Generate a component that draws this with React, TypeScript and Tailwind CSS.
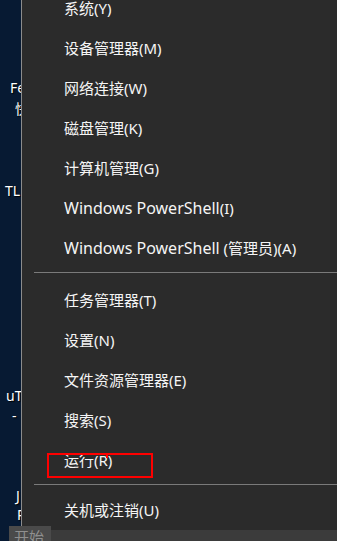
import React from 'react';

const groups: string[][] = [
  [
    '系统(Y)',
    '设备管理器(M)',
    '网络连接(W)',
    '磁盘管理(K)',
    '计算机管理(G)',
    'Windows PowerShell(I)',
    'Windows PowerShell (管理员)(A)',
  ],
  ['任务管理器(T)', '设置(N)', '文件资源管理器(E)', '搜索(S)', '运行(R)'],
  ['关机或注销(U)'],
];

const desktopLabels = [
  { text: 'Fe', top: 81, left: 10 },
  { text: '快', top: 102, left: 15 },
  { text: 'TL', top: 184, left: 5 },
  { text: 'uT', top: 389, left: 6 },
  { text: '-', top: 409, left: 12 },
  { text: 'J', top: 489, left: 16 },
  { text: 'P', top: 508, left: 17 },
];

function MenuItem({ label, marked }: { label: string; marked?: boolean }) {
  const ps = 'Windows PowerShell';
  return (
    <div className="relative h-[40px] flex items-center pl-[42px] text-[15px] text-[#f5f5f5] whitespace-nowrap">
      {label.startsWith(ps) ? (
        <span>
          <span className="text-[16px]">{ps}</span>
          {label.slice(ps.length)}
        </span>
      ) : (
        label
      )}
      {marked && (
        <>
          {/* annotation box drawn over the screenshot */}
          <div className="absolute left-[25px] top-[13px] w-[106px] h-[25px] border-2 border-[#ff0000]" />
          <div className="absolute left-[84px] top-[13px] w-[2px] h-[5px] bg-[#ff0000]" />
        </>
      )}
    </div>
  );
}

export default function App() {
  return (
    <div
      className="relative w-[337px] h-[541px] overflow-hidden bg-[#071a33] flex flex-col"
      style={{ fontFamily: '"Noto Sans", "Noto Sans CJK SC", sans-serif' }}
    >
      <div className="flex h-[530px]">
        {/* desktop behind the menu */}
        <div className="relative w-[21px] shrink-0 overflow-hidden bg-[#071a33]">
          {desktopLabels.map((l, i) => (
            <span
              key={i}
              className="absolute text-[14px] leading-none text-white [text-shadow:1px_1px_1px_#000]"
              style={{ top: l.top, left: l.left }}
            >
              {l.text}
            </span>
          ))}
        </div>

        {/* Win+X menu */}
        <div className="flex-1 border-l border-[#8c8c8c] bg-[#2b2b2b] overflow-hidden">
          <div className="-mt-[12px]">
            {groups.map((items, gi) => (
              <div key={gi}>
                {gi > 0 && (
                  <div className={gi === 1 ? 'pt-[4px] pb-[7px]' : 'pt-[4px] pb-[5px]'}>
                    <div className="ml-[12px] h-px bg-[#7a7a7a]" />
                  </div>
                )}
                {items.map((label) => (
                  <MenuItem key={label} label={label} marked={label === '运行(R)'} />
                ))}
              </div>
            ))}
          </div>
        </div>
      </div>

      {/* taskbar */}
      <div className="flex h-[11px]">
        <div className="w-[9px] bg-[#071a33]" />
        <div className="flex-1 bg-[#3b3b3b]" />
      </div>

      {/* start tooltip */}
      <div className="absolute left-[9px] top-[526px] w-[42px] h-[15px] bg-[#4a4a4a] overflow-hidden">
        <span className="block pl-[5px] pt-[1px] text-[15px] leading-[20px] text-[#8f8f8f]">开始</span>
      </div>
    </div>
  );
}
